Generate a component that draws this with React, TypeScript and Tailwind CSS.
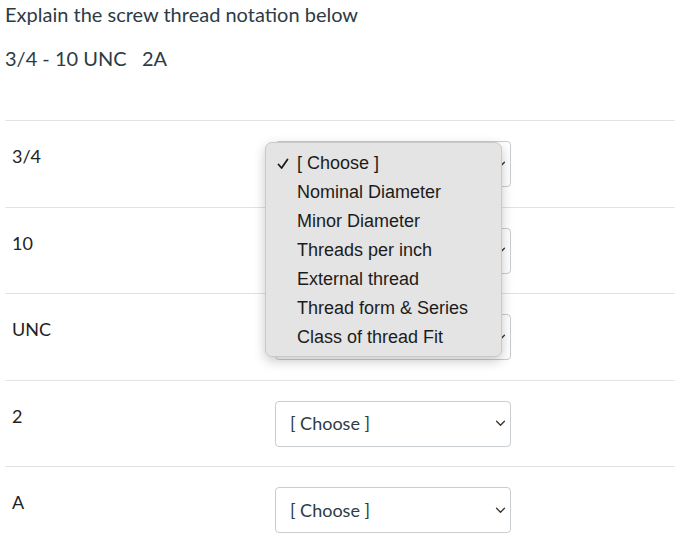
import { useState } from 'react';

const ROWS = ['3/4', '10', 'UNC', '2', 'A'];
const OPTIONS = [
  '[ Choose ]',
  'Nominal Diameter',
  'Minor Diameter',
  'Threads per inch',
  'External thread',
  'Thread form & Series',
  'Class of thread Fit',
];

function Chevron() {
  return (
    <svg aria-hidden viewBox="0 0 12 8" className="h-[7px] w-[11px]" fill="none">
      <path
        d="M1.5 1.5L6 6L10.5 1.5"
        stroke="#333"
        strokeWidth="1.5"
        strokeLinecap="round"
        strokeLinejoin="round"
      />
    </svg>
  );
}

function Check() {
  return (
    <svg aria-hidden viewBox="0 0 12 12" className="h-[12px] w-[12px]" fill="none">
      <path
        d="M1.5 6.5L4.6 10L10.5 1.5"
        stroke="#1c1c1c"
        strokeWidth="1.8"
        strokeLinecap="round"
        strokeLinejoin="round"
      />
    </svg>
  );
}

export default function App() {
  const [open] = useState(true);

  return (
    <main
      className="min-h-screen w-[680px] overflow-hidden bg-white px-[5px] text-[#2d3b45]"
      style={{ fontFamily: 'Lato, "Noto Sans", sans-serif' }}
    >
      <p className="text-[20px] leading-[28px]">Explain the screw thread notation below</p>
      <p className="mt-[16px] whitespace-pre text-[20px] leading-[28px]">3/4 - 10 UNC   2A</p>

      <div className="mt-[48px] w-[670px]">
        {ROWS.map((label, i) => (
          <div key={label} className="flex border-t border-[#e2e2e2] pb-[19.5px] pt-[20px]">
            <div className="w-[270px] pl-[7px] pt-[2px] text-[18px] leading-[26px] text-[#222]">
              {label}
            </div>
            <div className="relative">
              <div className="flex h-[46px] w-[236px] items-center justify-between rounded-[4px] border border-[#c7cdd1] bg-white pl-[14px] pr-[4px] text-[18px] text-[#2d3b45]">
                <span className={i < 3 && open ? 'invisible' : ''}>[ Choose ]</span>
                <Chevron />
              </div>
              {i === 0 && open ? (
                <div
                  className="absolute left-[-10px] top-[1px] z-10 h-[215px] w-[237px] rounded-[7px] border border-[#c9c9c9] bg-[#e4e4e4] pt-[6px] shadow-[0_4px_12px_rgba(0,0,0,0.22)]"
                  style={{ fontFamily: '"Liberation Sans", Arial, sans-serif' }}
                >
                  {OPTIONS.map((opt, j) => (
                    <div
                      key={opt}
                      className="flex h-[29px] items-center text-[18px] text-[#1c1c1c]"
                    >
                      <span className="flex w-[31px] pl-[11px]">{j === 0 ? <Check /> : null}</span>
                      <span>{opt}</span>
                    </div>
                  ))}
                </div>
              ) : null}
            </div>
          </div>
        ))}
      </div>
    </main>
  );
}
